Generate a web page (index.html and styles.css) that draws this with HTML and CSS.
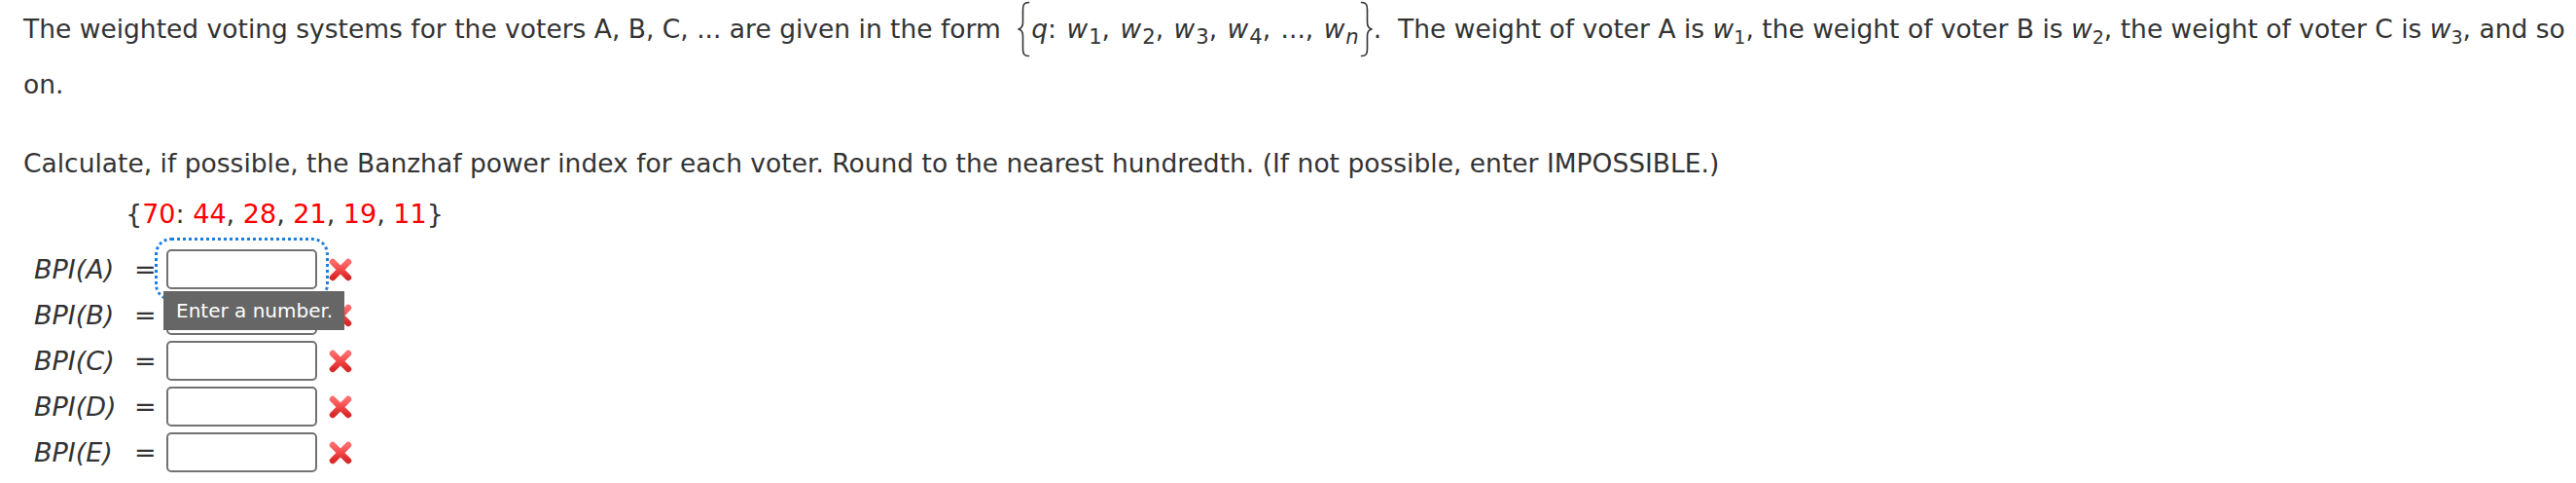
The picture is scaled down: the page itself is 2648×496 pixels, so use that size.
FILE: index.html
```html
<!DOCTYPE html>
<html>
<head>
<meta charset="utf-8">
<link rel="stylesheet" href="styles.css">
</head>
<body>
<svg class="defs" width="0" height="0" aria-hidden="true">
  <defs>
    <linearGradient id="xgrad" x1="0" y1="0" x2="0" y2="1">
      <stop offset="0" stop-color="#ff6b6b"/>
      <stop offset="0.5" stop-color="#f24848"/>
      <stop offset="1" stop-color="#d92828"/>
    </linearGradient>
  </defs>
</svg>
<div class="question">
  <p class="intro">The weighted voting systems for the voters A, B, C, ... are given in the form <span class="math"><svg class="brace" width="14" height="58" viewBox="0 0 14 58"><path d="M12.5 1.5 C7.5 1.5 6.5 4 6.5 9 L6.5 22 C6.5 26.5 5 28.5 1.5 29 C5 29.5 6.5 31.5 6.5 36 L6.5 49 C6.5 54 7.5 56.5 12.5 56.5" /></svg><i>q</i>: <i>w</i><sub>1</sub>, <i>w</i><sub>2</sub>, <i>w</i><sub>3</sub>, <i>w</i><sub>4</sub>, ..., <i>w</i><sub><i>n</i></sub><svg class="brace brace-r" width="14" height="58" viewBox="0 0 14 58"><path d="M1.5 1.5 C6.5 1.5 7.5 4 7.5 9 L7.5 22 C7.5 26.5 9 28.5 12.5 29 C9 29.5 7.5 31.5 7.5 36 L7.5 49 C7.5 54 6.5 56.5 1.5 56.5" /></svg></span>.&nbsp; The weight of voter A is <i>w</i><sub>1</sub>, the weight of voter B is <i>w</i><sub>2</sub>, the weight of voter C is <i>w</i><sub>3</sub>, and so on.</p>
  <p class="task">Calculate, if possible, the Banzhaf power index for each voter. Round to the nearest hundredth. (If not possible, enter IMPOSSIBLE.)</p>
  <p class="system">{<span class="red">70</span>: <span class="red">44</span>, <span class="red">28</span>, <span class="red">21</span>, <span class="red">19</span>, <span class="red">11</span>}</p>
  <div class="bpi">
    <span class="label">BPI(A)</span><span class="eq">=</span><span class="field"><span class="box focused"></span><span class="tooltip">Enter a number.</span></span><svg class="xmark" viewBox="0 0 26 26"><path d="M5 5 L21 21 M21 5 L5 21"/></svg>
    <span class="label">BPI(B)</span><span class="eq">=</span><span class="field"><span class="box"></span></span><svg class="xmark" viewBox="0 0 26 26"><path d="M5 5 L21 21 M21 5 L5 21"/></svg>
    <span class="label">BPI(C)</span><span class="eq">=</span><span class="field"><span class="box"></span></span><svg class="xmark" viewBox="0 0 26 26"><path d="M5 5 L21 21 M21 5 L5 21"/></svg>
    <span class="label">BPI(D)</span><span class="eq">=</span><span class="field"><span class="box"></span></span><svg class="xmark" viewBox="0 0 26 26"><path d="M5 5 L21 21 M21 5 L5 21"/></svg>
    <span class="label">BPI(E)</span><span class="eq">=</span><span class="field"><span class="box"></span></span><svg class="xmark" viewBox="0 0 26 26"><path d="M5 5 L21 21 M21 5 L5 21"/></svg>
  </div>
</div>
</body>
</html>
```
FILE: styles.css
```css
html, body {
  margin: 0;
  padding: 0;
  background: #fff;
}
body {
  font-family: "DejaVu Sans", Verdana, sans-serif;
  font-size: 26.5px;
  color: #333;
}
.defs {
  position: absolute;
}
.question {
  padding: 1px 10px 0 24px;
}
p {
  margin: 0;
}
.intro {
  line-height: 55px;
}
.intro sub {
  font-size: 0.72em;
  vertical-align: -0.3em;
  line-height: 0;
}
.math {
  white-space: nowrap;
  word-spacing: 2px;
}
.math sub {
  font-size: 0.8em;
  padding-left: 1px;
}
.brace {
  vertical-align: -20px;
  margin: 0 1px 0 8px;
}
.brace-r {
  margin: 0 0 0 1px;
}
.brace path {
  fill: none;
  stroke: #333;
  stroke-width: 1.6;
  stroke-linecap: round;
}
.task {
  margin-top: 36px;
  line-height: 36px;
}
.system {
  margin-top: 16px;
  margin-left: 105px;
  font-size: 27px;
  line-height: 36px;
}
.red {
  color: #f00;
}
.bpi {
  margin-top: 18px;
  margin-left: 11px;
  display: grid;
  grid-template-columns: 103px 16px 172px 37px;
  row-gap: 6px;
  align-items: center;
  font-size: 27px;
}
.label {
  font-style: italic;
  line-height: 41px;
}
.eq {
  line-height: 41px;
}
.field {
  position: relative;
  margin-left: 17px;
  width: 155px;
  height: 41px;
}
.box {
  display: block;
  box-sizing: border-box;
  width: 155px;
  height: 41px;
  border: 2px solid #727272;
  border-radius: 5px;
  background: #fff;
}
.box.focused {
  outline: 3px dotted #1a7fe0;
  outline-offset: 9px;
}
.tooltip {
  position: absolute;
  left: -3px;
  top: 43px;
  width: 186px;
  height: 40px;
  box-sizing: border-box;
  padding-left: 13px;
  background: #666;
  color: #fff;
  font-size: 20px;
  line-height: 40px;
  white-space: nowrap;
  z-index: 2;
}
.xmark {
  width: 26px;
  height: 26px;
  margin-left: 11px;
}
.xmark path {
  stroke: url(#xgrad);
  stroke-width: 6.5;
  stroke-linecap: round;
}
```
